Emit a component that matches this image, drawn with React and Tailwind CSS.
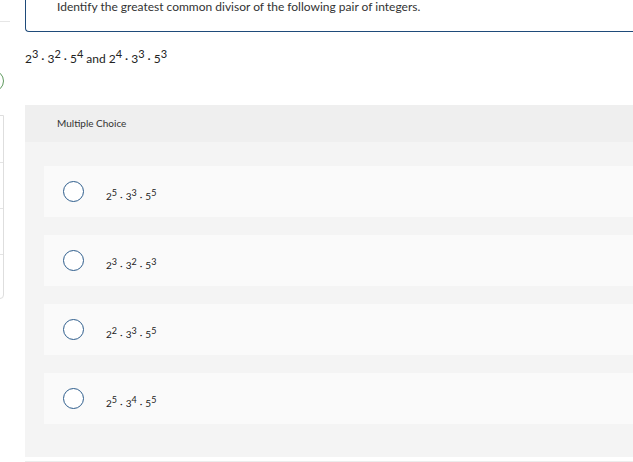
import React from 'react';

const options = [
  [['2', '5'], ['3', '3'], ['5', '5']],
  [['2', '3'], ['3', '2'], ['5', '3']],
  [['2', '2'], ['3', '3'], ['5', '5']],
  [['2', '5'], ['3', '4'], ['5', '5']],
];

function Product({ terms, supClass, dotClass }) {
  return (
    <span>
      {terms.map((t, i) => (
        <span key={i}>
          {i > 0 && <span className={dotClass}>·</span>}
          {t[0]}
          <sup className={supClass}>{t[1]}</sup>
        </span>
      ))}
    </span>
  );
}

export default function App() {
  return (
    <div
      className="flex w-full h-[462px] overflow-hidden bg-white text-[#333]"
      style={{ fontFamily: 'Lato, "Liberation Sans", sans-serif' }}
    >
      {/* Left rail (mostly off screen) */}
      <div className="w-[25px] shrink-0 flex flex-col">
        <div className="mt-[21px] w-[10px] h-px bg-[#e6e6e6]" />
        <div className="-ml-[18px] mt-[48px] w-[22px] h-[22px] rounded-full border border-[#5f9a5f]" />
        <div className="-ml-[20px] mt-[23px] w-[24px] border border-[#dedede] rounded-br-[4px] flex flex-col">
          <div className="h-[47px] border-b border-[#e4e4e4]" />
          <div className="h-[46px] border-b border-[#e4e4e4]" />
          <div className="h-[46px] border-b border-[#e4e4e4]" />
          <div className="h-[43px]" />
        </div>
      </div>

      {/* Main */}
      <div className="flex-1 min-w-0 flex flex-col">
        <div className="h-[32px] border-l border-b border-[#1f4b7a] rounded-bl-[4px] pl-[31px]">
          <p className="text-[12px] leading-[13px] text-[#333]">
            Identify the greatest common divisor of the following pair of integers.
          </p>
        </div>

        <div className="mt-[19px] text-[12px] leading-[16px] text-[#222]">
          <Product
            terms={[['2', '3'], ['3', '2'], ['5', '4']]}
            supClass="text-[11px] -top-[5px]"
            dotClass="mx-[3px]"
          />
          <span className="mx-[3px]">and</span>
          <Product
            terms={[['2', '4'], ['3', '3'], ['5', '3']]}
            supClass="text-[11px] -top-[5px]"
            dotClass="mx-[3px]"
          />
        </div>

        <div className="mt-[38px] h-[352px] bg-[#f4f4f4] flex flex-col">
          <div className="h-[37px] bg-[#efefef] flex items-center pl-[32px] text-[10px] text-[#333]">
            Multiple Choice
          </div>
          <div className="flex flex-col gap-[18px] pt-[24px] pl-[19px]">
            {options.map((terms, i) => (
              <div key={i} className="h-[51px] bg-[#fafafa] flex items-center pl-[19px]">
                <div className="w-[21px] h-[21px] rounded-full border-[1.5px] border-[#2e5d8c] bg-white shrink-0" />
                <div className="ml-[22px] mt-[9px] text-[10px] text-[#222]">
                  <Product terms={terms} supClass="text-[9px] -top-[4px]" dotClass="mx-[3px]" />
                </div>
              </div>
            ))}
          </div>
        </div>
        <div className="mt-[4px] h-px bg-[#ececec]" />
      </div>
    </div>
  );
}
